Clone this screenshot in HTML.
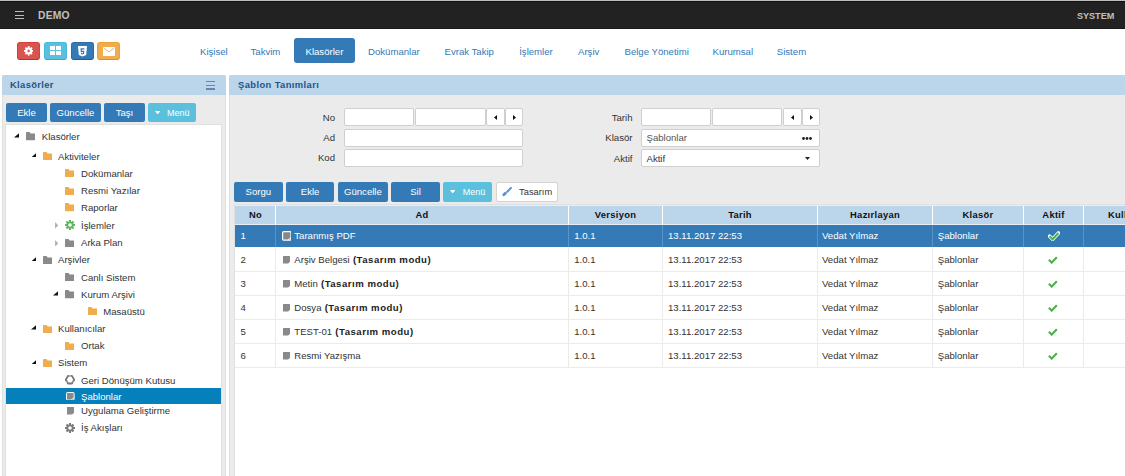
<!DOCTYPE html>
<html><head><meta charset="utf-8"><title>Demo</title>
<style>
*{margin:0;padding:0;box-sizing:border-box}
html,body{width:1125px;height:476px;overflow:hidden;background:#fff;font-family:"Liberation Sans",sans-serif;font-size:10px;color:#333}
body{position:relative}
.a{position:absolute;display:block}
.t{position:absolute;white-space:nowrap;line-height:20px}
</style></head><body>
<div class="a" style="left:0px;top:0px;width:1125px;height:1px;background:#bdbdbd"></div>
<div class="a" style="left:0px;top:1px;width:1125px;height:28px;background:#222;border-top:1px solid #121212;border-bottom:1px solid #1a1a1a"></div>
<div class="a" style="left:15px;top:11.2px;width:9.4px;height:1.3px;background:#bdbdbd"></div>
<div class="a" style="left:15px;top:14.5px;width:9.4px;height:1.3px;background:#bdbdbd"></div>
<div class="a" style="left:15px;top:17.8px;width:9.4px;height:1.3px;background:#bdbdbd"></div>
<div class="t" style="font-size:10.3px;top:5.63px;font-weight:bold;left:38px;color:#c0c0c0;letter-spacing:0.2px">DEMO</div>
<div class="t" style="font-size:9.1px;top:5.65px;font-weight:bold;right:10.700000000000045px;color:#c0c0c0">SYSTEM</div>
<div class="a" style="left:17px;top:41.8px;width:23px;height:18.2px;background:#d9534f;border:1px solid #d43f3a;border-bottom:1.6px solid #c12e2a;border-radius:3px"></div>
<div class="a" style="left:44px;top:41.8px;width:23px;height:18.2px;background:#5bc0de;border:1px solid #46b8da;border-bottom:1.6px solid #2aabd2;border-radius:3px"></div>
<div class="a" style="left:71px;top:41.8px;width:23px;height:18.2px;background:#337ab7;border:1px solid #2e6da4;border-bottom:1.6px solid #265a88;border-radius:3px"></div>
<div class="a" style="left:97px;top:41.8px;width:23px;height:18.2px;background:#f0ad4e;border:1px solid #eea236;border-bottom:1.6px solid #e38d13;border-radius:3px"></div>
<svg class="a" style="left:23.7px;top:46.1px;" width="9.4" height="9.8" viewBox="0 0 9.4 9.8"><g transform="translate(4.7,4.9)"><rect x="-0.9" y="-4.7" width="1.8" height="9.4" transform="rotate(0)" fill="#fff"/><rect x="-0.9" y="-4.7" width="1.8" height="9.4" transform="rotate(45)" fill="#fff"/><rect x="-0.9" y="-4.7" width="1.8" height="9.4" transform="rotate(90)" fill="#fff"/><rect x="-0.9" y="-4.7" width="1.8" height="9.4" transform="rotate(135)" fill="#fff"/><circle r="3.4" fill="#fff"/><rect x="-1.1" y="-1.1" width="2.2" height="2.2" transform="rotate(45)" fill="#d9534f"/></g></svg>
<svg class="a" style="left:50px;top:46px;" width="11" height="9" viewBox="0 0 11 9"><rect x="0" y="0" width="5" height="4" fill="#fff"/><rect x="6" y="0" width="5" height="4" fill="#fff"/><rect x="0" y="5" width="5" height="4" fill="#fff"/><rect x="6" y="5" width="5" height="4" fill="#fff"/></svg>
<svg class="a" style="left:77.5px;top:46px;" width="9" height="11" viewBox="0 0 9 11"><path d="M0 0H9L8.2 9L4.5 10.6L0.8 9Z" fill="#fff"/><path d="M2.6 2.2H6.4V3.4H3.8V4.8H6.3L6 8L4.5 8.6L3 8L2.9 6.8H4L4.1 7.3L4.5 7.5L5 7.3L5.1 5.9H2.7Z" fill="#337ab7"/></svg>
<svg class="a" style="left:102.5px;top:47px;" width="12" height="9" viewBox="0 0 12 9"><rect x="0" y="0" width="12" height="9" fill="#fff"/><path d="M0.5 0.8L6 5L11.5 0.8" stroke="#f0ad4e" stroke-width="0.9" fill="none"/></svg>
<div class="t" style="font-size:9.6px;top:41.57px;left:200px;color:#337ab7">Kişisel</div>
<div class="t" style="font-size:9.6px;top:41.57px;left:250.5px;color:#337ab7">Takvim</div>
<div class="t" style="font-size:9.6px;top:41.57px;left:368px;color:#337ab7">Dokümanlar</div>
<div class="t" style="font-size:9.6px;top:41.57px;left:444.5px;color:#337ab7">Evrak Takip</div>
<div class="t" style="font-size:9.6px;top:41.57px;left:519.2px;color:#337ab7">İşlemler</div>
<div class="t" style="font-size:9.6px;top:41.57px;left:578px;color:#337ab7">Arşiv</div>
<div class="t" style="font-size:9.6px;top:41.57px;left:624.5px;color:#337ab7">Belge Yönetimi</div>
<div class="t" style="font-size:9.6px;top:41.57px;left:712.5px;color:#337ab7">Kurumsal</div>
<div class="t" style="font-size:9.6px;top:41.57px;left:776.8px;color:#337ab7">Sistem</div>
<div class="a" style="left:294px;top:38px;width:61px;height:25px;background:#337ab7;border-radius:3px"></div>
<div class="t" style="font-size:9.6px;top:41.57px;left:305.5px;color:#fff">Klasörler</div>
<div class="a" style="left:2px;top:75px;width:224px;height:401px;background:#ebebeb;border:1px solid #e0e0e0;border-bottom:none"></div>
<div class="a" style="left:2px;top:75px;width:224px;height:20px;background:#bbd5eb;border-radius:3px 3px 0 0"></div>
<div class="t" style="font-size:9.4px;top:74.94px;font-weight:bold;left:10px;color:#245384;letter-spacing:0.35px">Klasörler</div>
<div class="a" style="left:206px;top:80.9px;width:9.2px;height:1.3px;background:#6786ad"></div>
<div class="a" style="left:206px;top:84.6px;width:9.2px;height:1.3px;background:#6786ad"></div>
<div class="a" style="left:206px;top:88.3px;width:9.2px;height:1.3px;background:#6786ad"></div>
<div class="a" style="left:6px;top:103px;width:41px;height:19px;background:#337ab7;border-radius:2px"></div>
<div class="t" style="font-size:9.6px;top:102.67px;left:-123.5px;width:300px;text-align:center;color:#fff">Ekle</div>
<div class="a" style="left:50px;top:103px;width:51px;height:19px;background:#337ab7;border-radius:2px"></div>
<div class="t" style="font-size:9.6px;top:102.67px;left:-74.5px;width:300px;text-align:center;color:#fff">Güncelle</div>
<div class="a" style="left:104px;top:103px;width:41px;height:19px;background:#337ab7;border-radius:2px"></div>
<div class="t" style="font-size:9.6px;top:102.67px;left:-25.5px;width:300px;text-align:center;color:#fff">Taşı</div>
<div class="a" style="left:148px;top:103px;width:48px;height:19px;background:#5bc0de;border-radius:2px"></div>
<svg class="a" style="left:154.5px;top:110.6px;" width="5.4" height="3.4" viewBox="0 0 5.4 3.4"><path d="M0 0H5.4L2.7 3.4Z" fill="#fff"/></svg>
<div class="t" style="font-size:9.0px;top:102.88px;left:167px;color:#fff">Menü</div>
<div class="a" style="left:5px;top:124px;width:217px;height:352px;background:#fff;border:1px solid #e0e0e0;border-bottom:none"></div>
<div class="a" style="left:6px;top:388px;width:215px;height:15.5px;background:#0580bb"></div>
<svg class="a" style="left:14.2px;top:133.29999999999998px;" width="5.3" height="4.6" viewBox="0 0 5.3 4.6"><path d="M5.3 0V4.6H0Z" fill="#111"/></svg>
<svg class="a" style="left:26.3px;top:132.39999999999998px;" width="9.2" height="8.2" viewBox="0 0 9.2 8.2"><path d="M0 0.6Q0 0 0.6 0H3.6L4.6 1.4H8.6Q9.2 1.4 9.2 2V7.6Q9.2 8.2 8.6 8.2H0.6Q0 8.2 0 7.6Z" fill="#8a8a8a"/></svg>
<div class="t" style="font-size:9.6px;top:127.07px;left:41.8px;color:#333">Klasörler</div>
<svg class="a" style="left:31.2px;top:152.9px;" width="5.3" height="4.6" viewBox="0 0 5.3 4.6"><path d="M5.3 0V4.6H0Z" fill="#111"/></svg>
<svg class="a" style="left:43px;top:152.0px;" width="9.2" height="8.2" viewBox="0 0 9.2 8.2"><path d="M0 0.6Q0 0 0.6 0H3.6L4.6 1.4H8.6Q9.2 1.4 9.2 2V7.6Q9.2 8.2 8.6 8.2H0.6Q0 8.2 0 7.6Z" fill="#f0ad4e"/></svg>
<div class="t" style="font-size:9.6px;top:146.67px;left:58px;color:#333">Aktiviteler</div>
<svg class="a" style="left:65.3px;top:169.2px;" width="9.2" height="8.2" viewBox="0 0 9.2 8.2"><path d="M0 0.6Q0 0 0.6 0H3.6L4.6 1.4H8.6Q9.2 1.4 9.2 2V7.6Q9.2 8.2 8.6 8.2H0.6Q0 8.2 0 7.6Z" fill="#f0ad4e"/></svg>
<div class="t" style="font-size:9.6px;top:163.87px;left:81px;color:#333">Dokümanlar</div>
<svg class="a" style="left:65.3px;top:186.6px;" width="9.2" height="8.2" viewBox="0 0 9.2 8.2"><path d="M0 0.6Q0 0 0.6 0H3.6L4.6 1.4H8.6Q9.2 1.4 9.2 2V7.6Q9.2 8.2 8.6 8.2H0.6Q0 8.2 0 7.6Z" fill="#f0ad4e"/></svg>
<div class="t" style="font-size:9.6px;top:181.27px;left:81px;color:#333">Resmi Yazılar</div>
<svg class="a" style="left:65.3px;top:203.39999999999998px;" width="9.2" height="8.2" viewBox="0 0 9.2 8.2"><path d="M0 0.6Q0 0 0.6 0H3.6L4.6 1.4H8.6Q9.2 1.4 9.2 2V7.6Q9.2 8.2 8.6 8.2H0.6Q0 8.2 0 7.6Z" fill="#f0ad4e"/></svg>
<div class="t" style="font-size:9.6px;top:198.07px;left:81px;color:#333">Raporlar</div>
<svg class="a" style="left:54.900000000000006px;top:222.0px;" width="3.4" height="6.8" viewBox="0 0 3.4 6.8"><path d="M0 0L3.4 3.4L0 6.8Z" fill="#b4b4b4"/></svg>
<svg class="a" style="left:65.2px;top:220.20000000000002px;" width="10" height="10" viewBox="0 0 10 10"><g transform="translate(5,5)"><rect x="-1" y="-5" width="2" height="10" transform="rotate(0)" fill="#5cb85c"/><rect x="-1" y="-5" width="2" height="10" transform="rotate(45)" fill="#5cb85c"/><rect x="-1" y="-5" width="2" height="10" transform="rotate(90)" fill="#5cb85c"/><rect x="-1" y="-5" width="2" height="10" transform="rotate(135)" fill="#5cb85c"/><circle r="3.6" fill="#5cb85c"/><circle r="1.8" fill="#fff"/></g></svg>
<div class="t" style="font-size:9.6px;top:215.77px;left:81px;color:#333">İşlemler</div>
<svg class="a" style="left:54.900000000000006px;top:239.6px;" width="3.4" height="6.8" viewBox="0 0 3.4 6.8"><path d="M0 0L3.4 3.4L0 6.8Z" fill="#b4b4b4"/></svg>
<svg class="a" style="left:65.3px;top:238.7px;" width="9.2" height="8.2" viewBox="0 0 9.2 8.2"><path d="M0 0.6Q0 0 0.6 0H3.6L4.6 1.4H8.6Q9.2 1.4 9.2 2V7.6Q9.2 8.2 8.6 8.2H0.6Q0 8.2 0 7.6Z" fill="#8a8a8a"/></svg>
<div class="t" style="font-size:9.6px;top:233.37px;left:81px;color:#333">Arka Plan</div>
<svg class="a" style="left:31.2px;top:256.6px;" width="5.3" height="4.6" viewBox="0 0 5.3 4.6"><path d="M5.3 0V4.6H0Z" fill="#111"/></svg>
<svg class="a" style="left:43px;top:255.7px;" width="9.2" height="8.2" viewBox="0 0 9.2 8.2"><path d="M0 0.6Q0 0 0.6 0H3.6L4.6 1.4H8.6Q9.2 1.4 9.2 2V7.6Q9.2 8.2 8.6 8.2H0.6Q0 8.2 0 7.6Z" fill="#8a8a8a"/></svg>
<div class="t" style="font-size:9.6px;top:250.37px;left:58px;color:#333">Arşivler</div>
<svg class="a" style="left:65.3px;top:273.09999999999997px;" width="9.2" height="8.2" viewBox="0 0 9.2 8.2"><path d="M0 0.6Q0 0 0.6 0H3.6L4.6 1.4H8.6Q9.2 1.4 9.2 2V7.6Q9.2 8.2 8.6 8.2H0.6Q0 8.2 0 7.6Z" fill="#8a8a8a"/></svg>
<div class="t" style="font-size:9.6px;top:267.77px;left:81px;color:#333">Canlı Sistem</div>
<svg class="a" style="left:53.2px;top:291.3px;" width="5.3" height="4.6" viewBox="0 0 5.3 4.6"><path d="M5.3 0V4.6H0Z" fill="#111"/></svg>
<svg class="a" style="left:65.3px;top:290.4px;" width="9.2" height="8.2" viewBox="0 0 9.2 8.2"><path d="M0 0.6Q0 0 0.6 0H3.6L4.6 1.4H8.6Q9.2 1.4 9.2 2V7.6Q9.2 8.2 8.6 8.2H0.6Q0 8.2 0 7.6Z" fill="#8a8a8a"/></svg>
<div class="t" style="font-size:9.6px;top:285.07px;left:81px;color:#333">Kurum Arşivi</div>
<svg class="a" style="left:88.2px;top:307.3px;" width="9.2" height="8.2" viewBox="0 0 9.2 8.2"><path d="M0 0.6Q0 0 0.6 0H3.6L4.6 1.4H8.6Q9.2 1.4 9.2 2V7.6Q9.2 8.2 8.6 8.2H0.6Q0 8.2 0 7.6Z" fill="#f0ad4e"/></svg>
<div class="t" style="font-size:9.6px;top:301.97px;left:103.2px;color:#333">Masaüstü</div>
<svg class="a" style="left:31.2px;top:325.40000000000003px;" width="5.3" height="4.6" viewBox="0 0 5.3 4.6"><path d="M5.3 0V4.6H0Z" fill="#111"/></svg>
<svg class="a" style="left:43px;top:324.5px;" width="9.2" height="8.2" viewBox="0 0 9.2 8.2"><path d="M0 0.6Q0 0 0.6 0H3.6L4.6 1.4H8.6Q9.2 1.4 9.2 2V7.6Q9.2 8.2 8.6 8.2H0.6Q0 8.2 0 7.6Z" fill="#f0ad4e"/></svg>
<div class="t" style="font-size:9.6px;top:319.17px;left:58px;color:#333">Kullanıcılar</div>
<svg class="a" style="left:65.3px;top:341.59999999999997px;" width="9.2" height="8.2" viewBox="0 0 9.2 8.2"><path d="M0 0.6Q0 0 0.6 0H3.6L4.6 1.4H8.6Q9.2 1.4 9.2 2V7.6Q9.2 8.2 8.6 8.2H0.6Q0 8.2 0 7.6Z" fill="#f0ad4e"/></svg>
<div class="t" style="font-size:9.6px;top:336.27px;left:81px;color:#333">Ortak</div>
<svg class="a" style="left:31.2px;top:359.5px;" width="5.3" height="4.6" viewBox="0 0 5.3 4.6"><path d="M5.3 0V4.6H0Z" fill="#111"/></svg>
<svg class="a" style="left:43px;top:358.59999999999997px;" width="9.2" height="8.2" viewBox="0 0 9.2 8.2"><path d="M0 0.6Q0 0 0.6 0H3.6L4.6 1.4H8.6Q9.2 1.4 9.2 2V7.6Q9.2 8.2 8.6 8.2H0.6Q0 8.2 0 7.6Z" fill="#f0ad4e"/></svg>
<div class="t" style="font-size:9.6px;top:353.27px;left:58px;color:#333">Sistem</div>
<svg class="a" style="left:65.3px;top:375.40000000000003px;" width="10" height="9.4" viewBox="0 0 10 9.4"><path d="M3 0.9H7L9.2 4.7L7 8.5H3L0.8 4.7Z" fill="none" stroke="#777" stroke-width="1.8" stroke-linejoin="round"/><path d="M5 0V1.8M1 7.6L2.2 6.8M9 7.6L7.8 6.8" stroke="#fff" stroke-width="0.8"/></svg>
<div class="t" style="font-size:9.6px;top:370.67px;left:81px;color:#333">Geri Dönüşüm Kutusu</div>
<svg class="a" style="left:66.3px;top:391.9px;" width="8.6" height="8.6" viewBox="0 0 8.6 8.6"><rect x="0.5" y="0.5" width="7.6" height="7.6" rx="0.8" fill="#888" stroke="#fff" stroke-width="1"/><path d="M5.5 7.8L7.8 5.5" stroke="#fff" stroke-width="0.8"/></svg>
<div class="t" style="font-size:9.6px;top:386.57px;left:81px;color:#fff">Şablonlar</div>
<svg class="a" style="left:66.8px;top:407.2px;" width="7.4" height="7.6" viewBox="0 0 7.4 7.6"><path d="M0 0H7.4V5.4L5.2 7.6H0Z" fill="#8a8a8a"/></svg>
<div class="t" style="font-size:9.6px;top:401.37px;left:81px;color:#333">Uygulama Geliştirme</div>
<svg class="a" style="left:65.2px;top:422.5px;" width="10" height="10" viewBox="0 0 10 10"><g transform="translate(5,5)"><rect x="-1" y="-5" width="2" height="10" transform="rotate(0)" fill="#7a7a7a"/><rect x="-1" y="-5" width="2" height="10" transform="rotate(45)" fill="#7a7a7a"/><rect x="-1" y="-5" width="2" height="10" transform="rotate(90)" fill="#7a7a7a"/><rect x="-1" y="-5" width="2" height="10" transform="rotate(135)" fill="#7a7a7a"/><circle r="3.6" fill="#7a7a7a"/><circle r="1.8" fill="#fff"/></g></svg>
<div class="t" style="font-size:9.6px;top:418.07px;left:81px;color:#333">İş Akışları</div>
<div class="a" style="left:229px;top:75px;width:900px;height:401px;background:#ebebeb;border:1px solid #e0e0e0;border-bottom:none;border-right:none"></div>
<div class="a" style="left:229px;top:75px;width:896px;height:20px;background:#bbd5eb;border-radius:3px 0 0 0"></div>
<div class="t" style="font-size:9.4px;top:74.94px;font-weight:bold;left:238px;color:#245384;letter-spacing:0.4px">Şablon Tanımları</div>
<div class="t" style="font-size:9.6px;top:108.17px;right:790px;">No</div>
<div class="t" style="font-size:9.6px;top:128.27px;right:790px;">Ad</div>
<div class="t" style="font-size:9.6px;top:148.37px;right:790px;">Kod</div>
<div class="a" style="left:343.5px;top:108px;width:70.5px;height:18.4px;background:#fff;border:1px solid #cfcfcf;border-radius:2px"></div>
<div class="a" style="left:415px;top:108px;width:70.5px;height:18.4px;background:#fff;border:1px solid #cfcfcf;border-radius:2px"></div>
<div class="a" style="left:486px;top:108px;width:18.5px;height:18.4px;background:#fff;border:1px solid #cfcfcf;border-radius:2px"></div>
<div class="a" style="left:504.5px;top:108px;width:18.5px;height:18.4px;background:#fff;border:1px solid #cfcfcf;border-radius:2px"></div>
<svg class="a" style="left:493.5px;top:114.5px;" width="3" height="5" viewBox="0 0 3 5"><path d="M3 0V5L0 2.5Z" fill="#111"/></svg>
<svg class="a" style="left:512.5px;top:114.5px;" width="3" height="5" viewBox="0 0 3 5"><path d="M0 0V5L3 2.5Z" fill="#111"/></svg>
<div class="a" style="left:343.5px;top:128.5px;width:179.5px;height:18.4px;background:#fff;border:1px solid #cfcfcf;border-radius:2px"></div>
<div class="a" style="left:343.5px;top:149px;width:179.5px;height:18.4px;background:#fff;border:1px solid #cfcfcf;border-radius:2px"></div>
<div class="t" style="font-size:9.6px;top:108.17px;right:492.5px;">Tarih</div>
<div class="t" style="font-size:9.6px;top:128.27px;right:492.5px;">Klasör</div>
<div class="t" style="font-size:9.6px;top:148.57px;right:492.5px;">Aktif</div>
<div class="a" style="left:641px;top:108px;width:70px;height:18.4px;background:#fff;border:1px solid #cfcfcf;border-radius:2px"></div>
<div class="a" style="left:712px;top:108px;width:70px;height:18.4px;background:#fff;border:1px solid #cfcfcf;border-radius:2px"></div>
<div class="a" style="left:783px;top:108px;width:18.5px;height:18.4px;background:#fff;border:1px solid #cfcfcf;border-radius:2px"></div>
<div class="a" style="left:801.5px;top:108px;width:18.5px;height:18.4px;background:#fff;border:1px solid #cfcfcf;border-radius:2px"></div>
<svg class="a" style="left:790.5px;top:114.5px;" width="3" height="5" viewBox="0 0 3 5"><path d="M3 0V5L0 2.5Z" fill="#111"/></svg>
<svg class="a" style="left:809.5px;top:114.5px;" width="3" height="5" viewBox="0 0 3 5"><path d="M0 0V5L3 2.5Z" fill="#111"/></svg>
<div class="a" style="left:641px;top:128.5px;width:179px;height:18.4px;background:#fff;border:1px solid #cfcfcf;border-radius:2px"></div>
<div class="a" style="left:641px;top:149px;width:179px;height:18.4px;background:#fff;border:1px solid #cfcfcf;border-radius:2px"></div>
<div class="t" style="font-size:9.6px;top:128.47px;left:646.5px;color:#555">Şablonlar</div>
<svg class="a" style="left:802px;top:136.8px;" width="10" height="3" viewBox="0 0 10 3"><circle cx="1.5" cy="1.5" r="1.4" fill="#222"/><circle cx="5" cy="1.5" r="1.4" fill="#222"/><circle cx="8.5" cy="1.5" r="1.4" fill="#222"/></svg>
<div class="t" style="font-size:9.6px;top:148.67px;left:646.5px;color:#333">Aktif</div>
<svg class="a" style="left:805px;top:156.8px;" width="5" height="3" viewBox="0 0 5 3"><path d="M0 0H5L2.5 3Z" fill="#222"/></svg>
<div class="a" style="left:234px;top:182px;width:48.60000000000002px;height:19.5px;background:#337ab7;border-radius:2px"></div>
<div class="t" style="font-size:9.6px;top:181.87px;left:108.30000000000001px;width:300px;text-align:center;color:#fff">Sorgu</div>
<div class="a" style="left:286px;top:182px;width:48.30000000000001px;height:19.5px;background:#337ab7;border-radius:2px"></div>
<div class="t" style="font-size:9.6px;top:181.87px;left:160.14999999999998px;width:300px;text-align:center;color:#fff">Ekle</div>
<div class="a" style="left:338px;top:182px;width:49.80000000000001px;height:19.5px;background:#337ab7;border-radius:2px"></div>
<div class="t" style="font-size:9.6px;top:181.87px;left:212.89999999999998px;width:300px;text-align:center;color:#fff">Güncelle</div>
<div class="a" style="left:391px;top:182px;width:49px;height:19.5px;background:#337ab7;border-radius:2px"></div>
<div class="t" style="font-size:9.6px;top:181.87px;left:265.5px;width:300px;text-align:center;color:#fff">Sil</div>
<div class="a" style="left:443px;top:182px;width:48.7px;height:19.5px;background:#5bc0de;border-radius:2px"></div>
<svg class="a" style="left:450px;top:190px;" width="5.4" height="3.4" viewBox="0 0 5.4 3.4"><path d="M0 0H5.4L2.7 3.4Z" fill="#fff"/></svg>
<div class="t" style="font-size:9.0px;top:182.08px;left:462.8px;color:#fff">Menü</div>
<div class="a" style="left:495.6px;top:182px;width:62.5px;height:19.5px;background:#fff;border:1px solid #d4d4d4;border-radius:2px"></div>
<svg class="a" style="left:502px;top:187.4px;" width="10" height="9.6" viewBox="0 0 10 9.6"><path d="M9 0.9L5.2 4.8" stroke="#5b93cc" stroke-width="2" stroke-linecap="round"/><ellipse cx="2.6" cy="7" rx="2.6" ry="1.5" transform="rotate(-45 2.6 7)" fill="#5b93cc"/></svg>
<div class="t" style="font-size:9.3px;top:181.98px;left:519.1px;color:#333">Tasarım</div>
<div class="a" style="left:234px;top:204px;width:900px;height:272px;background:#fff;border:1px solid #e0e0e0;border-right:none;border-bottom:none"></div>
<div class="a" style="left:235px;top:205px;width:890px;height:1px;background:#e9eef2"></div>
<div class="a" style="left:235px;top:206px;width:890px;height:18px;background:#bbd5eb"></div>
<div class="a" style="left:235px;top:224px;width:890px;height:1px;background:#e8eef4"></div>
<div class="a" style="left:275px;top:206px;width:1px;height:18px;background:#fff"></div>
<div class="a" style="left:568px;top:206px;width:1px;height:18px;background:#fff"></div>
<div class="a" style="left:662px;top:206px;width:1px;height:18px;background:#fff"></div>
<div class="a" style="left:817px;top:206px;width:1px;height:18px;background:#fff"></div>
<div class="a" style="left:932px;top:206px;width:1px;height:18px;background:#fff"></div>
<div class="a" style="left:1023px;top:206px;width:1px;height:18px;background:#fff"></div>
<div class="a" style="left:1083px;top:206px;width:1px;height:18px;background:#fff"></div>
<div class="t" style="font-size:9.4px;top:204.94px;font-weight:bold;left:105.5px;width:300px;text-align:center;color:#111;letter-spacing:0.3px">No</div>
<div class="t" style="font-size:9.4px;top:204.94px;font-weight:bold;left:272px;width:300px;text-align:center;color:#111;letter-spacing:0.3px">Ad</div>
<div class="t" style="font-size:9.4px;top:204.94px;font-weight:bold;left:465.5px;width:300px;text-align:center;color:#111;letter-spacing:0.3px">Versiyon</div>
<div class="t" style="font-size:9.4px;top:204.94px;font-weight:bold;left:590px;width:300px;text-align:center;color:#111;letter-spacing:0.3px">Tarih</div>
<div class="t" style="font-size:9.4px;top:204.94px;font-weight:bold;left:725px;width:300px;text-align:center;color:#111;letter-spacing:0.3px">Hazırlayan</div>
<div class="t" style="font-size:9.4px;top:204.94px;font-weight:bold;left:828px;width:300px;text-align:center;color:#111;letter-spacing:0.3px">Klasör</div>
<div class="t" style="font-size:9.4px;top:204.94px;font-weight:bold;left:903.5px;width:300px;text-align:center;color:#111;letter-spacing:0.3px">Aktif</div>
<div class="t" style="font-size:9.4px;top:204.94px;font-weight:bold;left:1108px;color:#111;letter-spacing:0.3px">Kullanıcı</div>
<div class="a" style="left:235px;top:225px;width:890px;height:22px;background:#337ab7"></div>
<div class="a" style="left:275px;top:225px;width:1px;height:22px;background:#5a93c6"></div>
<div class="a" style="left:568px;top:225px;width:1px;height:22px;background:#5a93c6"></div>
<div class="a" style="left:662px;top:225px;width:1px;height:22px;background:#5a93c6"></div>
<div class="a" style="left:817px;top:225px;width:1px;height:22px;background:#5a93c6"></div>
<div class="a" style="left:932px;top:225px;width:1px;height:22px;background:#5a93c6"></div>
<div class="a" style="left:1023px;top:225px;width:1px;height:22px;background:#5a93c6"></div>
<div class="a" style="left:1083px;top:225px;width:1px;height:22px;background:#5a93c6"></div>
<div class="t" style="font-size:9.6px;top:226.17px;left:240.5px;color:#fff">1</div>
<svg class="a" style="left:281.5px;top:231.2px;" width="9.6" height="10" viewBox="0 0 9.6 10"><rect x="0.6" y="0.6" width="8.4" height="8.6" rx="1" fill="#888" stroke="#fff" stroke-width="1.2"/><path d="M6 9L9 6" stroke="#fff" stroke-width="0.8"/></svg>
<div class="t" style="font-size:9.6px;top:226.17px;left:294.3px;color:#fff">Taranmış PDF</div>
<div class="t" style="font-size:9.6px;top:226.17px;left:574.2px;color:#fff">1.0.1</div>
<div class="t" style="font-size:9.6px;top:226.17px;left:668px;color:#fff">13.11.2017 22:53</div>
<div class="t" style="font-size:9.6px;top:226.17px;left:822px;color:#fff">Vedat Yılmaz</div>
<div class="t" style="font-size:9.6px;top:226.17px;left:937.8px;color:#fff">Şablonlar</div>
<svg class="a" style="left:1047.5px;top:231px;" width="12" height="10.5" viewBox="0 0 12 10.5"><path d="M1.6 5.2L4.6 8.2L10.4 2" stroke="#fff" stroke-width="3.6" fill="none" stroke-linecap="round" stroke-linejoin="round"/><path d="M1.6 5.2L4.6 8.2L10.4 2" stroke="#4cae4c" stroke-width="2" fill="none"/></svg>
<div class="a" style="left:235px;top:271px;width:890px;height:1px;background:#ebebeb"></div>
<div class="a" style="left:275px;top:247px;width:1px;height:24px;background:#ebebeb"></div>
<div class="a" style="left:568px;top:247px;width:1px;height:24px;background:#ebebeb"></div>
<div class="a" style="left:662px;top:247px;width:1px;height:24px;background:#ebebeb"></div>
<div class="a" style="left:817px;top:247px;width:1px;height:24px;background:#ebebeb"></div>
<div class="a" style="left:932px;top:247px;width:1px;height:24px;background:#ebebeb"></div>
<div class="a" style="left:1023px;top:247px;width:1px;height:24px;background:#ebebeb"></div>
<div class="a" style="left:1083px;top:247px;width:1px;height:24px;background:#ebebeb"></div>
<div class="t" style="font-size:9.6px;top:250.17px;left:240.5px;color:#333">2</div>
<svg class="a" style="left:282.6px;top:256.1px;" width="7.4" height="7.6" viewBox="0 0 7.4 7.6"><path d="M0 0H7.4V5.4L5.2 7.6H0Z" fill="#8a8a8a"/></svg>
<div class="t" style="font-size:9.6px;top:250.17px;left:294.3px;color:#333">Arşiv Belgesi<b style="color:#222;font-size:9.6px;letter-spacing:0.5px"> (Tasarım modu)</b></div>
<div class="t" style="font-size:9.6px;top:250.17px;left:574.2px;color:#333">1.0.1</div>
<div class="t" style="font-size:9.6px;top:250.17px;left:668px;color:#333">13.11.2017 22:53</div>
<div class="t" style="font-size:9.6px;top:250.17px;left:822px;color:#333">Vedat Yılmaz</div>
<div class="t" style="font-size:9.6px;top:250.17px;left:937.8px;color:#333">Şablonlar</div>
<svg class="a" style="left:1048.3px;top:256px;" width="9.6" height="8" viewBox="0 0 9.6 8"><path d="M0.9 3.8L3.7 6.6L8.8 1.2" stroke="#4cae4c" stroke-width="2.1" fill="none"/></svg>
<div class="a" style="left:235px;top:295px;width:890px;height:1px;background:#ebebeb"></div>
<div class="a" style="left:275px;top:271px;width:1px;height:24px;background:#ebebeb"></div>
<div class="a" style="left:568px;top:271px;width:1px;height:24px;background:#ebebeb"></div>
<div class="a" style="left:662px;top:271px;width:1px;height:24px;background:#ebebeb"></div>
<div class="a" style="left:817px;top:271px;width:1px;height:24px;background:#ebebeb"></div>
<div class="a" style="left:932px;top:271px;width:1px;height:24px;background:#ebebeb"></div>
<div class="a" style="left:1023px;top:271px;width:1px;height:24px;background:#ebebeb"></div>
<div class="a" style="left:1083px;top:271px;width:1px;height:24px;background:#ebebeb"></div>
<div class="t" style="font-size:9.6px;top:274.17px;left:240.5px;color:#333">3</div>
<svg class="a" style="left:282.6px;top:280.1px;" width="7.4" height="7.6" viewBox="0 0 7.4 7.6"><path d="M0 0H7.4V5.4L5.2 7.6H0Z" fill="#8a8a8a"/></svg>
<div class="t" style="font-size:9.6px;top:274.17px;left:294.3px;color:#333">Metin<b style="color:#222;font-size:9.6px;letter-spacing:0.5px"> (Tasarım modu)</b></div>
<div class="t" style="font-size:9.6px;top:274.17px;left:574.2px;color:#333">1.0.1</div>
<div class="t" style="font-size:9.6px;top:274.17px;left:668px;color:#333">13.11.2017 22:53</div>
<div class="t" style="font-size:9.6px;top:274.17px;left:822px;color:#333">Vedat Yılmaz</div>
<div class="t" style="font-size:9.6px;top:274.17px;left:937.8px;color:#333">Şablonlar</div>
<svg class="a" style="left:1048.3px;top:280px;" width="9.6" height="8" viewBox="0 0 9.6 8"><path d="M0.9 3.8L3.7 6.6L8.8 1.2" stroke="#4cae4c" stroke-width="2.1" fill="none"/></svg>
<div class="a" style="left:235px;top:319px;width:890px;height:1px;background:#ebebeb"></div>
<div class="a" style="left:275px;top:295px;width:1px;height:24px;background:#ebebeb"></div>
<div class="a" style="left:568px;top:295px;width:1px;height:24px;background:#ebebeb"></div>
<div class="a" style="left:662px;top:295px;width:1px;height:24px;background:#ebebeb"></div>
<div class="a" style="left:817px;top:295px;width:1px;height:24px;background:#ebebeb"></div>
<div class="a" style="left:932px;top:295px;width:1px;height:24px;background:#ebebeb"></div>
<div class="a" style="left:1023px;top:295px;width:1px;height:24px;background:#ebebeb"></div>
<div class="a" style="left:1083px;top:295px;width:1px;height:24px;background:#ebebeb"></div>
<div class="t" style="font-size:9.6px;top:298.17px;left:240.5px;color:#333">4</div>
<svg class="a" style="left:282.6px;top:304.1px;" width="7.4" height="7.6" viewBox="0 0 7.4 7.6"><path d="M0 0H7.4V5.4L5.2 7.6H0Z" fill="#8a8a8a"/></svg>
<div class="t" style="font-size:9.6px;top:298.17px;left:294.3px;color:#333">Dosya<b style="color:#222;font-size:9.6px;letter-spacing:0.5px"> (Tasarım modu)</b></div>
<div class="t" style="font-size:9.6px;top:298.17px;left:574.2px;color:#333">1.0.1</div>
<div class="t" style="font-size:9.6px;top:298.17px;left:668px;color:#333">13.11.2017 22:53</div>
<div class="t" style="font-size:9.6px;top:298.17px;left:822px;color:#333">Vedat Yılmaz</div>
<div class="t" style="font-size:9.6px;top:298.17px;left:937.8px;color:#333">Şablonlar</div>
<svg class="a" style="left:1048.3px;top:304px;" width="9.6" height="8" viewBox="0 0 9.6 8"><path d="M0.9 3.8L3.7 6.6L8.8 1.2" stroke="#4cae4c" stroke-width="2.1" fill="none"/></svg>
<div class="a" style="left:235px;top:343px;width:890px;height:1px;background:#ebebeb"></div>
<div class="a" style="left:275px;top:319px;width:1px;height:24px;background:#ebebeb"></div>
<div class="a" style="left:568px;top:319px;width:1px;height:24px;background:#ebebeb"></div>
<div class="a" style="left:662px;top:319px;width:1px;height:24px;background:#ebebeb"></div>
<div class="a" style="left:817px;top:319px;width:1px;height:24px;background:#ebebeb"></div>
<div class="a" style="left:932px;top:319px;width:1px;height:24px;background:#ebebeb"></div>
<div class="a" style="left:1023px;top:319px;width:1px;height:24px;background:#ebebeb"></div>
<div class="a" style="left:1083px;top:319px;width:1px;height:24px;background:#ebebeb"></div>
<div class="t" style="font-size:9.6px;top:322.17px;left:240.5px;color:#333">5</div>
<svg class="a" style="left:282.6px;top:328.1px;" width="7.4" height="7.6" viewBox="0 0 7.4 7.6"><path d="M0 0H7.4V5.4L5.2 7.6H0Z" fill="#8a8a8a"/></svg>
<div class="t" style="font-size:9.6px;top:322.17px;left:294.3px;color:#333">TEST-01<b style="color:#222;font-size:9.6px;letter-spacing:0.5px"> (Tasarım modu)</b></div>
<div class="t" style="font-size:9.6px;top:322.17px;left:574.2px;color:#333">1.0.1</div>
<div class="t" style="font-size:9.6px;top:322.17px;left:668px;color:#333">13.11.2017 22:53</div>
<div class="t" style="font-size:9.6px;top:322.17px;left:822px;color:#333">Vedat Yılmaz</div>
<div class="t" style="font-size:9.6px;top:322.17px;left:937.8px;color:#333">Şablonlar</div>
<svg class="a" style="left:1048.3px;top:328px;" width="9.6" height="8" viewBox="0 0 9.6 8"><path d="M0.9 3.8L3.7 6.6L8.8 1.2" stroke="#4cae4c" stroke-width="2.1" fill="none"/></svg>
<div class="a" style="left:235px;top:367px;width:890px;height:1px;background:#ebebeb"></div>
<div class="a" style="left:275px;top:343px;width:1px;height:24px;background:#ebebeb"></div>
<div class="a" style="left:568px;top:343px;width:1px;height:24px;background:#ebebeb"></div>
<div class="a" style="left:662px;top:343px;width:1px;height:24px;background:#ebebeb"></div>
<div class="a" style="left:817px;top:343px;width:1px;height:24px;background:#ebebeb"></div>
<div class="a" style="left:932px;top:343px;width:1px;height:24px;background:#ebebeb"></div>
<div class="a" style="left:1023px;top:343px;width:1px;height:24px;background:#ebebeb"></div>
<div class="a" style="left:1083px;top:343px;width:1px;height:24px;background:#ebebeb"></div>
<div class="t" style="font-size:9.6px;top:346.17px;left:240.5px;color:#333">6</div>
<svg class="a" style="left:282.6px;top:352.1px;" width="7.4" height="7.6" viewBox="0 0 7.4 7.6"><path d="M0 0H7.4V5.4L5.2 7.6H0Z" fill="#8a8a8a"/></svg>
<div class="t" style="font-size:9.6px;top:346.17px;left:294.3px;color:#333">Resmi Yazışma</div>
<div class="t" style="font-size:9.6px;top:346.17px;left:574.2px;color:#333">1.0.1</div>
<div class="t" style="font-size:9.6px;top:346.17px;left:668px;color:#333">13.11.2017 22:53</div>
<div class="t" style="font-size:9.6px;top:346.17px;left:822px;color:#333">Vedat Yılmaz</div>
<div class="t" style="font-size:9.6px;top:346.17px;left:937.8px;color:#333">Şablonlar</div>
<svg class="a" style="left:1048.3px;top:352px;" width="9.6" height="8" viewBox="0 0 9.6 8"><path d="M0.9 3.8L3.7 6.6L8.8 1.2" stroke="#4cae4c" stroke-width="2.1" fill="none"/></svg>
</body></html>
